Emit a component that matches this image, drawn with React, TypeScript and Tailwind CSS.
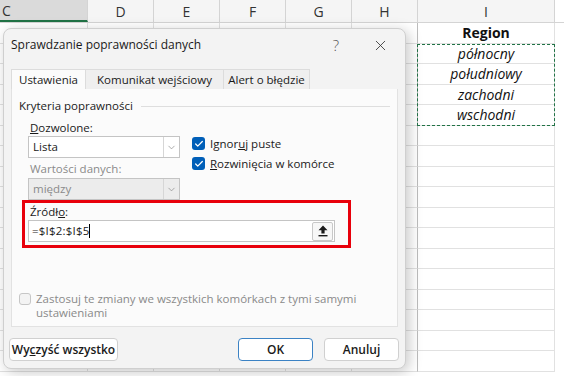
import { Check, ChevronDown, X } from 'lucide-react';

const cols = [
  { label: 'C', w: 88 },
  { label: 'D', w: 66 },
  { label: 'E', w: 66 },
  { label: 'F', w: 66 },
  { label: 'G', w: 66 },
  { label: 'H', w: 66 },
  { label: 'I', w: 137 },
];

const regions = ['Region', 'północny', 'południowy', 'zachodni', 'wschodni'];

const CheckedBox = () => (
  <span className="w-[13px] h-[13px] rounded-[3px] bg-[#005fb8] flex items-center justify-center">
    <Check size={10} strokeWidth={3} className="text-white" />
  </span>
);

const Select = ({ value, disabled }: { value: string; disabled?: boolean }) => (
  <div
    className={`h-[22px] w-[152px] flex items-stretch border border-[#c4c4c4] ${
      disabled ? 'bg-[#ececec] text-[#8a8a8a]' : 'bg-white text-[#1a1a1a]'
    }`}
  >
    <div className="flex-1 flex items-center pl-[4px]">{value}</div>
    <div className="w-[16px] border-l border-[#d6d6d6] flex items-center justify-center">
      <ChevronDown size={11} strokeWidth={1.5} className="text-[#888]" />
    </div>
  </div>
);

export default function App() {
  return (
    <div
      className="relative w-[564px] h-[376px] overflow-hidden bg-white text-[11.5px]"
      style={{ fontFamily: '"Segoe UI", "Open Sans", "Noto Sans", sans-serif' }}
    >
      {/* Sheet */}
      <div className="flex h-[23px] bg-[#f5f5f5] border-b border-[#d4d4d4]">
        {cols.map((c) => (
          <div
            key={c.label}
            style={{ width: c.w }}
            className={`flex items-center justify-center text-[14px] text-[#333] border-r border-[#d4d4d4] ${
              c.label === 'C' ? 'bg-[#dadada] border-b-2 border-b-[#217346] justify-start pl-[2px]' : ''
            }`}
          >
            {c.label}
          </div>
        ))}
        <div className="flex-1 bg-white" />
      </div>
      <div className="flex flex-col">
        {Array.from({ length: 17 }).map((_, r) => (
          <div key={r} className="flex h-[20.5px]">
            {cols.map((c) => (
              <div
                key={c.label}
                style={{ width: c.w }}
                className={`border-b border-r border-[#e1e1e1] flex items-center justify-center text-[14px] text-[#111] ${
                  c.label === 'H' ? 'border-r-[#bcbcbc]' : ''
                }`}
              >
                {c.label === 'I' && r < regions.length ? (
                  r === 0 ? (
                    <span className="font-bold">{regions[r]}</span>
                  ) : (
                    <span className="italic">{regions[r]}</span>
                  )
                ) : null}
              </div>
            ))}
            <div className="flex-1" />
          </div>
        ))}
      </div>

      {/* copy marquee */}
      <div className="absolute left-[417px] top-[44px] w-[138px] h-[82px] border-[1.5px] border-dashed border-[#217346]" />

      {/* Dialog */}
      <div className="absolute left-[3px] top-[28px] w-[403px] h-[341px] rounded-[8px] bg-[#f3f3f3] border border-[#cfcfcf] shadow-[3px_3px_14px_rgba(0,0,0,0.22)] flex flex-col text-[#1a1a1a]">
        <div className="h-[32px] flex items-center pl-[7px] text-[12px]">
          <span className="flex-1">Sprawdzanie poprawności danych</span>
          <span className="text-[15px] text-[#555] font-light mr-[33px]">?</span>
          <X size={17} strokeWidth={1.2} className="text-[#333] mr-[16px]" />
        </div>

        {/* Tabs */}
        <div className="mt-[8px] ml-[7px] flex h-[20px]">
          <div className="w-[75px] bg-[#fbfbfb] border border-b-0 border-[#dcdcdc] flex items-center justify-center">
            Ustawienia
          </div>
          <div className="w-[138px] bg-[#efefef] border-r border-t border-[#dcdcdc] flex items-center justify-center">
            Komunikat wejściowy
          </div>
          <div className="w-[86px] bg-[#efefef] border-r border-t border-[#dcdcdc] flex items-center justify-center">
            Alert o błędzie
          </div>
        </div>

        {/* Panel */}
        <div className="ml-[7px] w-[387px] h-[238px] bg-[#fbfbfb] border border-t-0 border-[#e2e2e2] flex flex-col">
          <div className="pt-[9px] pl-[7px] pr-[7px] flex items-center h-[25px]">
            <span className="leading-[16px]">Kryteria poprawności</span>
            <div className="flex-1 h-px bg-[#dedede] ml-[8px]" />
          </div>

          <div className="flex mt-[6px]">
            <div className="ml-[16px] w-[152px] flex flex-col">
              <div className="h-[16px] leading-[16px] pl-[2px]">
                <u>D</u>ozwolone:
              </div>
              <Select value="Lista" />
              <div className="mt-[3px] h-[16px] leading-[16px] pl-[2px] text-[#8a8a8a]">Wartości danych:</div>
              <div className="mt-[1px]">
                <Select value="między" disabled />
              </div>
            </div>
            <div className="ml-[12px] flex flex-col gap-[7px] pt-[17px]">
              <div className="flex items-center gap-[5px] h-[13px]">
                <CheckedBox />
                <span>
                  Ignor<u>u</u>j puste
                </span>
              </div>
              <div className="flex items-center gap-[5px] h-[13px]">
                <CheckedBox />
                <span>
                  <u>R</u>ozwinięcia w komórce
                </span>
              </div>
            </div>
          </div>

          {/* Źródło field, highlighted */}
          <div className="ml-[10px] w-[329px] h-[48px] border-[3px] border-[#e8000b] flex flex-col">
            <div className="mt-[1px] h-[16px] leading-[16px] pl-[5px]">
              Źródł<u>o</u>:
            </div>
            <div className="ml-[3px] w-[307px] h-[22px] bg-white border border-[#c4c4c4] flex items-center pl-[3px] pr-[1px]">
              <span className="tracking-[0.2px]">=$I$2:$I$5</span>
              <span className="w-px h-[14px] bg-black" />
              <div className="flex-1" />
              <div className="w-[21px] h-[19px] border border-[#c8c8c8] rounded-[2px] bg-[#f7f7f7] flex items-center justify-center">
                <svg width="10" height="12" viewBox="0 0 10 12">
                  <path d="M5 0.5 L9.5 5.2 H6.6 V8.6 H3.4 V5.2 H0.5 Z" fill="#1a1a1a" />
                  <rect x="0.5" y="10" width="9" height="1.4" fill="#1a1a1a" />
                </svg>
              </div>
            </div>
          </div>

          <div className="mt-[44px] ml-[7px] flex gap-[5px] text-[#8a8a8a] leading-[14px]">
            <span className="mt-[1px] w-[12px] h-[12px] rounded-[3px] border border-[#c6c6c6] bg-[#f3f3f3] shrink-0" />
            <span>
              Zastosuj te zmiany we wszystkich komórkach z tymi samymi
              <br />
              ustawieniami
            </span>
          </div>
        </div>

        {/* Buttons */}
        <div className="mt-[11px] flex h-[23px] pl-[5px] text-[12px]">
          <button className="w-[109px] bg-white border border-[#d0d0d0] rounded-[4px] font-semibold">
            Wy<u>c</u>zyść wszystko
          </button>
          <div className="flex-1" />
          <button className="w-[75px] bg-white border-[1.5px] border-[#3b82c4] rounded-[4px] font-semibold">
            OK
          </button>
          <button className="ml-[11px] mr-[6px] w-[75px] bg-white border border-[#d0d0d0] rounded-[4px] font-semibold">
            Anuluj
          </button>
        </div>
      </div>
    </div>
  );
}
